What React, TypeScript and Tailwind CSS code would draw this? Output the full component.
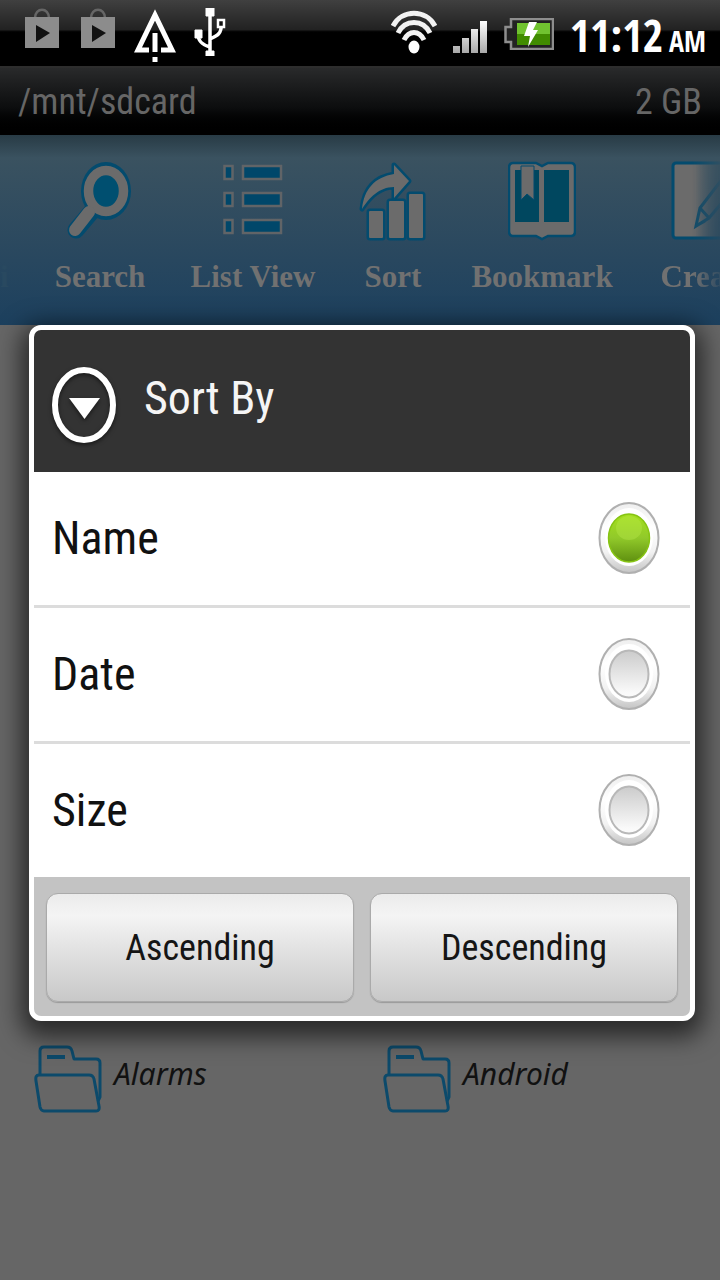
import { useState } from "react";
import type { ReactNode } from "react";

const SORT_KEYS = ["Name", "Date", "Size"];

function ShopBag() {
  return (
    <svg className="h-[42px] w-9" viewBox="0 0 36 42" fill="none">
      <path d="M11 10C11 -1 25 -1 25 10" stroke="#666" strokeWidth="2.5" />
      <path d="M1 9H35V40H1Z" fill="#8c8c8c" />
      <path d="M12 17V34L26 25Z" fill="#111" />
    </svg>
  );
}

function DebugIcon() {
  return (
    <svg className="h-[56px] w-[46px]" viewBox="0 0 46 56" fill="none">
      <path d="M17 42H6L23 7L40 42H29" stroke="#fff" strokeWidth="5" />
      <path d="M23 25V44M23 49V54" stroke="#fff" strokeWidth="5" />
    </svg>
  );
}

function UsbIcon() {
  return (
    <svg className="h-12 w-8" viewBox="0 0 32 48" fill="none">
      <path d="M16 3V44M4 26C4 34 9 37 16 39M27 17C28 26 22 28 16 31" stroke="#fff" strokeWidth="3.5" />
      <path d="M12 0H20V8H12ZM12 43H20V48H12ZM1 22H8V30H1Z" fill="#fff" stroke="#fff" />
      <path d="M24 12H30V19H24Z" fill="#111" stroke="#fff" strokeWidth="2.5" />
    </svg>
  );
}

function WifiIcon() {
  return (
    <svg className="h-[44px] w-[46px]" viewBox="0 0 46 44" fill="none" stroke="#f2f2f2" strokeWidth="5">
      <path d="M2 16C11 -1 35 -1 44 16" />
      <path d="M7 23C14 9 32 9 39 23" />
      <path d="M13 30C18 20 28 20 33 30" />
      <ellipse cx="23" cy="37" rx="5.5" ry="6.5" fill="#fff" stroke="none" />
    </svg>
  );
}

function SignalIcon() {
  return (
    <svg className="h-8 w-[35px]" viewBox="0 0 35 32">
      <defs>
        <linearGradient id="bars" x1="0" y1="0" x2="0" y2="32" gradientUnits="userSpaceOnUse">
          <stop stopColor="#fff" />
          <stop offset="1" stopColor="#a8a8a8" />
        </linearGradient>
      </defs>
      <path d="M0 25H7V32H0ZM9 17H16V32H9ZM18 8H25V32H18ZM27 0H34V32H27Z" fill="url(#bars)" />
    </svg>
  );
}

function BatteryIcon() {
  return (
    <svg className="h-8 w-[50px]" viewBox="0 0 50 32">
      <path d="M7 1H49V31H7V24H1.500V9H7Z" fill="#222" stroke="#8e8e8e" strokeWidth="2.500" />
      <path d="M13 5H46V16H13Z" fill="#71c330" />
      <path d="M13 16H46V27H13Z" fill="#418c00" />
      <path d="M25 4H33L29 12H34L24 29L26 18H20Z" fill="#fff" />
    </svg>
  );
}

function SearchIcon() {
  return (
    <svg className="h-20 w-[68px]" viewBox="0 0 68 80" fill="none">
      <path d="M10 69L27 49" stroke="#034b6e" strokeWidth="17" strokeLinecap="round" />
      <ellipse cx="40" cy="30" rx="25" ry="29" fill="#034b6e" />
      <ellipse cx="40" cy="30" rx="17.500" ry="20.500" fill="#004f70" stroke="#6b6b6b" strokeWidth="9.500" />
      <path d="M9 69L23 51" stroke="#6b6b6b" strokeWidth="12" strokeLinecap="round" />
    </svg>
  );
}

function ListIcon() {
  return (
    <svg className="h-20 w-[60px]" viewBox="0 0 60 80" fill="#00476a" stroke="#616467" strokeWidth="2.500">
      {[5, 32, 59].map((y) => (
        <g key={y}>
          <rect x="1.500" y={y} width="8" height="13" />
          <rect x="20" y={y} width="38" height="13" />
        </g>
      ))}
    </svg>
  );
}

function SortIcon() {
  return (
    <svg className="h-20 w-[68px]" viewBox="0 0 68 80" strokeLinejoin="round">
      <g fill="#6b6b6b" stroke="#034b6e" strokeWidth="5" style={{ paintOrder: "stroke" }}>
        <rect x="10" y="50" width="14" height="27" rx="1" />
        <rect x="30" y="40" width="15" height="37" rx="1" />
        <rect x="50" y="33" width="14" height="44" rx="1" />
        <path d="M3 48C5 28 16 16 35 13V4L50 20L35 37V26C20 26 10 37 3 48Z" />
      </g>
    </svg>
  );
}

function BookIcon() {
  return (
    <svg className="h-20 w-[68px]" viewBox="0 0 68 80" fill="none">
      <path d="M5 2H28L34 5L40 2H63Q67 2 67 7V70Q67 75 63 75H40L34 78L28 75H5Q1 75 1 70V7Q1 2 5 2Z" fill="#6b6b6b" stroke="#034b6e" strokeWidth="2.500" />
      <path d="M7 9H31V61H7ZM36 9H61V61H36Z" fill="#00475f" />
      <path d="M13 5H26V39L19 33L13 39Z" fill="#6b6b6b" stroke="#034b6e" />
    </svg>
  );
}

function CreateIcon() {
  return (
    <svg className="h-20 w-[68px]" viewBox="0 0 68 80" fill="none">
      <defs>
        <linearGradient id="sheet">
          <stop offset="0.35" stopColor="#6b6b6b" />
          <stop offset="0.75" stopColor="#36505f" />
        </linearGradient>
      </defs>
      <rect x="2" y="2" width="64" height="75" rx="3" fill="url(#sheet)" stroke="#034b6e" strokeWidth="3" />
      <path d="M25 65L29 47L52 17L62 29L38 57ZM29 47L38 57M25 65L34 60" stroke="#124d6a" strokeWidth="3" />
    </svg>
  );
}

function FolderIcon() {
  return (
    <svg className="h-[70px] w-[68px] shrink-0" viewBox="0 0 68 70" fill="none" stroke="#0c4a6b" strokeWidth="3" strokeLinejoin="round">
      <path d="M6 30V7Q6 3 10 3H33Q37 3 38 7L40 15H62Q66 15 66 19V53L64 57" />
      <path d="M13 13H31" strokeWidth="4" />
      <path d="M5 31H55Q59 31 60 35L65 62Q66 67 62 67H10Q7 67 6 63L2 37Q1 31 5 31Z" />
    </svg>
  );
}

function RadioFace({ on }: { on: boolean }) {
  return (
    <svg className="h-[74px] w-[62px] shrink-0" viewBox="0 0 62 74">
      <defs>
        <linearGradient id="rim" x1="0" y1="0" x2="0" y2="1">
          <stop stopColor="#eee" />
          <stop offset="0.35" stopColor="#fff" />
          <stop offset="0.7" stopColor="#f2f2f2" />
          <stop offset="1" stopColor="#c4c4c4" />
        </linearGradient>
        <linearGradient id="empty" x1="0" y1="0" x2="0" y2="1">
          <stop stopColor="#cbcbcb" />
          <stop offset="0.9" stopColor="#fafafa" />
        </linearGradient>
        <linearGradient id="green" x1="0" y1="0" x2="0" y2="1">
          <stop stopColor="#a5e01f" />
          <stop offset="0.5" stopColor="#91c92a" />
          <stop offset="1" stopColor="#5f9010" />
        </linearGradient>
      </defs>
      <ellipse cx="31" cy="36" rx="29.500" ry="35" fill="url(#rim)" stroke="#b0b0b0" strokeWidth="2" />
      <ellipse cx="31" cy="35" rx="24" ry="29" fill="#fff" />
      {on ? (
        <>
          <ellipse cx="31" cy="36" rx="20.500" ry="24" fill="url(#green)" stroke="#86c412" strokeWidth="1.500" />
          <ellipse cx="31" cy="26" rx="13" ry="12" fill="#b8e84a" opacity="0.4" />
        </>
      ) : (
        <ellipse cx="31" cy="36" rx="19.500" ry="23.500" fill="url(#empty)" stroke="#b8b8b8" strokeWidth="2" />
      )}
    </svg>
  );
}

function Tool({ label, className, children }: { label: string; className: string; children: ReactNode }) {
  return (
    <button type="button" className={`flex shrink-0 flex-col items-center gap-4 ${className}`}>
      {children}
      <span className="font-['Liberation_Serif',serif] text-[31px] leading-10 font-bold whitespace-nowrap text-[#717171]">{label}</span>
    </button>
  );
}

function Folder({ name }: { name: string }) {
  return (
    <a href={`#${name}`} className="flex items-start gap-3">
      <FolderIcon />
      <span className="font-['Noto_Sans',sans-serif] text-[30px] leading-[60px] text-[#111] italic">{name}</span>
    </a>
  );
}

export default function App() {
  const [sortKey, setSortKey] = useState("Name");
  const action =
    "h-[109px] flex-1 rounded-xl border border-[#aaa] bg-linear-to-b from-[#ebebeb] from-0% via-[#f4f4f4] via-20% to-[#c8c8c8] text-4xl text-[#151515] shadow-[0_1px_1px_#999]";

  return (
    <div className="relative flex min-h-screen flex-col overflow-hidden bg-[#666] font-['Roboto_Condensed','Noto_Sans',sans-serif]">
      <header className="flex h-[66px] items-start justify-between bg-linear-to-b from-[#404040] from-0% via-[#222] via-45% to-black to-50% pr-[14px] pl-3">
        <div className="flex gap-4 pl-3">
          <div className="flex gap-5 pt-2">
            <ShopBag />
            <ShopBag />
          </div>
          <div className="flex gap-4 pt-2">
            <DebugIcon />
            <UsbIcon />
          </div>
        </div>
        <div className="flex items-start gap-4">
          <div className="pt-[10px]"><WifiIcon /></div>
          <div className="pt-[21px]"><SignalIcon /></div>
          <div className="pt-[18px]"><BatteryIcon /></div>
          <div className="flex items-baseline gap-[6px] font-['Open_Sans_Condensed','Open_Sans',sans-serif] leading-[70px] font-bold text-white">
            <span className="text-[44px]">11:12</span>
            <span className="text-[28px]">AM</span>
          </div>
        </div>
      </header>

      <div className="flex h-[69px] items-center justify-between border-t-2 border-[#2d2d2d] bg-linear-to-b from-[#292a2b] via-[#0c0d0e] via-60% to-black px-[18px] text-4xl text-[#666]">
        <span>/mnt/sdcard</span>
        <span>2 GB</span>
      </div>

      <nav className="flex h-[190px] items-start overflow-hidden bg-linear-to-b from-[#283b45] from-0% via-[#3a5260] via-12% to-[#1c405e] pt-[26px]">
        <span className="w-[46px] shrink-0 pt-24 font-['Liberation_Serif',serif] text-[31px] leading-10 font-bold text-[#294960]">i</span>
        <Tool label="Search" className="w-[108px]"><SearchIcon /></Tool>
        <Tool label="List View" className="w-[198px]"><ListIcon /></Tool>
        <Tool label="Sort" className="w-[82px]"><SortIcon /></Tool>
        <Tool label="Bookmark" className="w-[216px]"><BookIcon /></Tool>
        <div className="flex min-w-0 flex-1 justify-start overflow-hidden mask-r-from-60% mask-r-to-110% pl-2">
          <Tool label="Create" className="w-[94px]"><CreateIcon /></Tool>
        </div>
      </nav>

      <main className="flex flex-1 flex-col justify-end pb-[166px]">
        <div className="grid grid-cols-2 gap-3 pl-[34px]">
          <Folder name="Alarms" />
          <Folder name="Android" />
        </div>
      </main>

      <div className="absolute inset-x-0 top-[66px] bottom-0 flex items-center pr-[25px] pl-[29px]">
        <section role="dialog" aria-labelledby="sort-title" className="w-full overflow-hidden rounded-xl border-5 border-white bg-white shadow-[0_8px_24px_8px_#0009]">
          <h1 id="sort-title" className="flex h-[142px] items-start gap-7 bg-[#333] pt-9 pr-5 pl-[18px] text-[46px] leading-16 text-[#f5f5f5]">
            <svg className="h-[78px] w-16 drop-shadow-[0_2px_2px_#0008]" viewBox="0 0 64 78">
              <ellipse cx="32" cy="39" rx="29" ry="35" fill="none" stroke="#fff" strokeWidth="6" />
              <path d="M17 32H48L32.500 53Z" fill="#fff" />
            </svg>
            Sort By
          </h1>
          <fieldset className="divide-y-3 divide-[#dcdcdc]">
            {SORT_KEYS.map((key) => (
              <label key={key} className="box-content flex h-[133px] items-center justify-between pr-[30px] pl-[18px] text-[46px] text-[#111]">
                {key}
                <input type="radio" name="sort" className="sr-only" checked={sortKey === key} onChange={() => setSortKey(key)} />
                <RadioFace on={sortKey === key} />
              </label>
            ))}
          </fieldset>
          <div className="flex gap-4 bg-[#c3c3c3] px-3 pt-4 pb-[14px]">
            <button type="button" className={action}>Ascending</button>
            <button type="button" className={action}>Descending</button>
          </div>
        </section>
      </div>
    </div>
  );
}
